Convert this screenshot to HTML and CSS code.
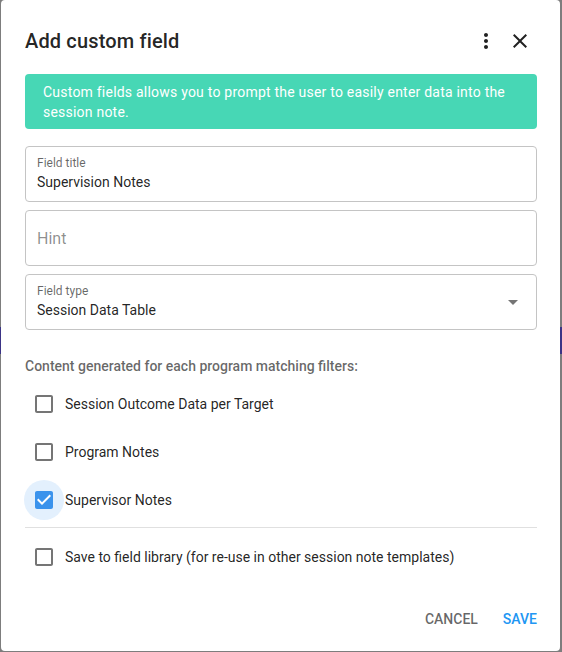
FILE: index.html
```html
<!DOCTYPE html>
<html lang="en">
<head>
<meta charset="utf-8">
<title>Add custom field</title>
<link rel="stylesheet" href="styles.css">
</head>
<body>
<div class="dialog">
  <div class="header">
    <h2 class="title">Add custom field</h2>
    <div class="actions-top">
      <svg class="icon" viewBox="0 0 24 24" width="24" height="24"><path d="M12 8c1.1 0 2-.9 2-2s-.9-2-2-2-2 .9-2 2 .9 2 2 2zm0 2c-1.1 0-2 .9-2 2s.9 2 2 2 2-.9 2-2-.9-2-2-2zm0 6c-1.1 0-2 .9-2 2s.9 2 2 2 2-.9 2-2-.9-2-2-2z"/></svg>
      <svg class="icon" viewBox="0 0 24 24" width="24" height="24"><path d="M19 6.41L17.59 5 12 10.59 6.41 5 5 6.41 10.59 12 5 17.59 6.41 19 12 13.41 17.59 19 19 17.59 13.41 12z"/></svg>
    </div>
  </div>

  <div class="banner">Custom fields allows you to prompt the user to easily enter data into the session note.</div>

  <div class="field">
    <div class="field-body">
      <div class="field-label">Field title</div>
      <div class="field-value">Supervision Notes</div>
    </div>
  </div>

  <div class="field field-hint">
    <div class="field-placeholder">Hint</div>
  </div>

  <div class="field">
    <div class="field-body">
      <div class="field-label">Field type</div>
      <div class="field-value">Session Data Table</div>
    </div>
    <svg class="arrow" viewBox="0 0 24 24" width="24" height="24"><path d="M7 10l5 5 5-5z"/></svg>
  </div>

  <div class="section-label">Content generated for each program matching filters:</div>

  <div class="check-row">
    <span class="check">
      <svg viewBox="0 0 24 24" width="24" height="24"><path d="M19 5v14H5V5h14m0-2H5c-1.1 0-2 .9-2 2v14c0 1.1.9 2 2 2h14c1.1 0 2-.9 2-2V5c0-1.1-.9-2-2-2z"/></svg>
    </span>
    <span class="check-label">Session Outcome Data per Target</span>
  </div>
  <div class="check-row">
    <span class="check">
      <svg viewBox="0 0 24 24" width="24" height="24"><path d="M19 5v14H5V5h14m0-2H5c-1.1 0-2 .9-2 2v14c0 1.1.9 2 2 2h14c1.1 0 2-.9 2-2V5c0-1.1-.9-2-2-2z"/></svg>
    </span>
    <span class="check-label">Program Notes</span>
  </div>
  <div class="check-row">
    <span class="check checked">
      <svg viewBox="0 0 24 24" width="24" height="24"><path d="M5 3h14c1.11 0 2 .9 2 2v14c0 1.1-.89 2-2 2H5c-1.11 0-2-.9-2-2V5c0-1.1.89-2 2-2z"/><path class="tick" d="M10 17l-5-5 1.41-1.41L10 14.17l7.59-7.59L19 8z"/></svg>
    </span>
    <span class="check-label">Supervisor Notes</span>
  </div>

  <div class="divider"></div>

  <div class="check-row save-row">
    <span class="check">
      <svg viewBox="0 0 24 24" width="24" height="24"><path d="M19 5v14H5V5h14m0-2H5c-1.1 0-2 .9-2 2v14c0 1.1.9 2 2 2h14c1.1 0 2-.9 2-2V5c0-1.1-.9-2-2-2z"/></svg>
    </span>
    <span class="check-label">Save to field library (for re-use in other session note templates)</span>
  </div>

  <div class="footer">
    <button class="btn btn-cancel">Cancel</button>
    <button class="btn btn-save">Save</button>
  </div>
</div>
</body>
</html>
```

FILE: styles.css
```css
* {
  box-sizing: border-box;
}

html, body {
  margin: 0;
  padding: 0;
  height: 652px;
  overflow: hidden;
}

body {
  background: linear-gradient(to bottom, #7d7d7d 0, #7d7d7d 327px, #3b3486 327px, #3b3486 354px, #7d7d7d 354px);
  font-family: Roboto, "Liberation Sans", Arial, sans-serif;
  color: rgba(0, 0, 0, 0.87);
}

.dialog {
  margin-left: 1px;
  width: 559px;
  height: 651px;
  background: #fff;
  border-radius: 4px;
  padding: 25px 23px 0 24px;
}

.header {
  display: flex;
  align-items: center;
  justify-content: space-between;
  height: 32px;
}

.title {
  margin: 0;
  font-size: 20px;
  font-weight: 500;
  line-height: 32px;
  letter-spacing: 0.15px;
  color: rgba(0, 0, 0, 0.87);
}

.actions-top {
  display: flex;
  gap: 10px;
  margin-right: 5px;
}

.icon {
  display: block;
  fill: rgba(0, 0, 0, 0.87);
}

.banner {
  margin-top: 17px;
  background: #47d7b5;
  color: #fff;
  border-radius: 4px;
  padding: 8px 18px 7px;
  font-size: 14px;
  line-height: 20px;
  letter-spacing: 0.22px;
}

.field {
  margin-top: 8px;
  height: 56px;
  border: 1px solid #c4c4c4;
  border-radius: 4px;
  display: flex;
  align-items: center;
  padding: 0 11px 0 11px;
}

.banner + .field {
  margin-top: 17px;
}

.field-body {
  flex: 1;
  align-self: flex-start;
  padding-top: 8px;
}

.field-label {
  font-size: 12px;
  line-height: 16px;
  color: rgba(0, 0, 0, 0.6);
}

.field-value {
  font-size: 14px;
  line-height: 22px;
  color: rgba(0, 0, 0, 0.87);
}

.field-placeholder {
  font-size: 16px;
  color: rgba(0, 0, 0, 0.45);
}

.arrow {
  display: block;
  fill: rgba(0, 0, 0, 0.54);
}

.section-label {
  margin-top: 26px;
  font-size: 14px;
  font-weight: 500;
  line-height: 20px;
  color: rgba(0, 0, 0, 0.6);
}

.check-row {
  height: 48px;
  display: flex;
  align-items: center;
}

.section-label + .check-row {
  margin-top: 4px;
}

.check {
  position: relative;
  margin-left: 7px;
  width: 24px;
  height: 24px;
  margin-right: 9px;
}

.check svg {
  position: relative;
  display: block;
  fill: rgba(0, 0, 0, 0.54);
}

.check.checked::before {
  content: "";
  position: absolute;
  left: -8px;
  top: -8px;
  width: 40px;
  height: 40px;
  border-radius: 50%;
  background: #e3f0fd;
}

.check.checked svg {
  fill: #3b93ec;
}

.check.checked .tick {
  fill: #fff;
}

.check-label {
  font-size: 14px;
  line-height: 20px;
}

.divider {
  margin-top: 3px;
  height: 1px;
  background: #e0e0e0;
}

.save-row {
  margin-top: 5px;
}

.footer {
  margin-top: 28px;
  display: flex;
  justify-content: flex-end;
  gap: 25px;
}

.btn {
  border: 0;
  background: none;
  padding: 0;
  font-family: inherit;
  font-size: 14px;
  font-weight: 500;
  line-height: 20px;
  text-transform: uppercase;
  cursor: pointer;
}

.btn-cancel {
  color: rgba(0, 0, 0, 0.6);
}

.btn-save {
  color: #2196f3;
}
```
